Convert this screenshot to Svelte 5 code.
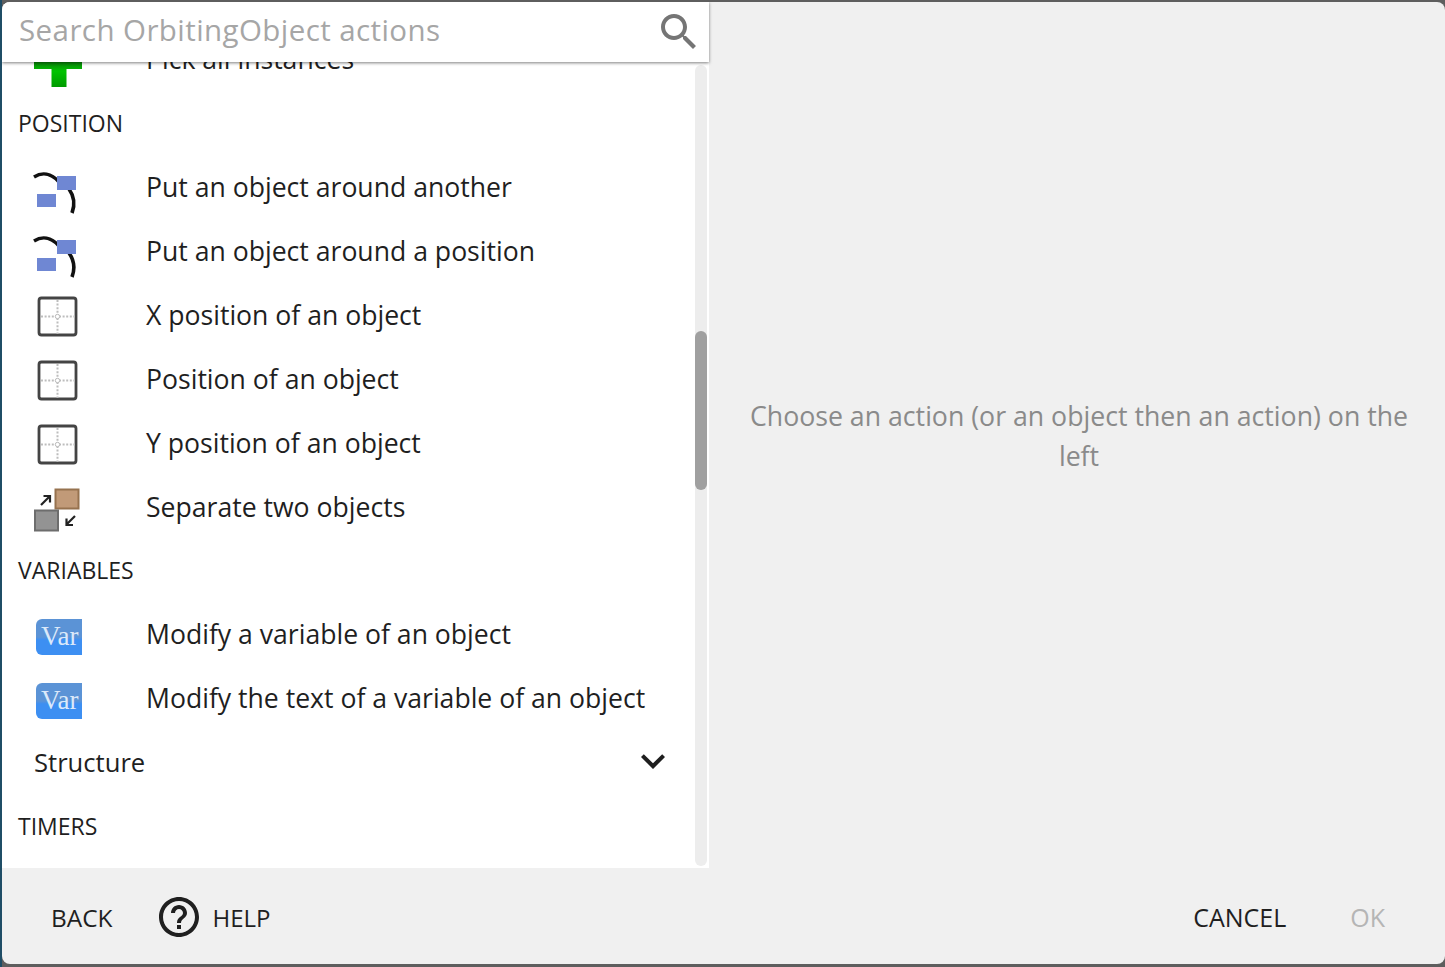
<script>
	const sections = [
		{
			title: 'POSITION',
			rows: [
				{ icon: 'arc', label: 'Put an object around another' },
				{ icon: 'arc', label: 'Put an object around a position' },
				{ icon: 'cross', label: 'X position of an object' },
				{ icon: 'cross', label: 'Position of an object' },
				{ icon: 'cross', label: 'Y position of an object' },
				{ icon: 'separate', label: 'Separate two objects' }
			]
		},
		{
			title: 'VARIABLES',
			rows: [
				{ icon: 'var', label: 'Modify a variable of an object' },
				{ icon: 'var', label: 'Modify the text of a variable of an object' }
			]
		}
	];
</script>

<div class="backdrop">
	<div class="dialog">
		<div class="content">
			<div class="left">
				<div class="search">
					<input class="search-input" type="text" placeholder="Search OrbitingObject actions" />
					<svg class="search-icon" viewBox="0 0 24 24" fill="#757575">
						<path d="M15.5 14h-.79l-.28-.27C15.41 12.59 16 11.11 16 9.5 16 5.91 13.09 3 9.5 3S3 5.91 3 9.5 5.91 16 9.5 16c1.61 0 3.09-.59 4.23-1.57l.27.28v.79l5 4.99L20.49 19l-4.99-5zm-6 0C7.01 14 5 11.99 5 9.5S7.01 5 9.5 5 14 7.01 14 9.5 11.99 14 9.5 14z" />
					</svg>
				</div>
				<div class="list">
					<div class="list-inner">
						<div class="row first">
							<svg class="icon" viewBox="0 0 48 48">
								<defs>
									<linearGradient id="green" x1="0" y1="0" x2="0" y2="1">
										<stop offset="0" stop-color="#0a8a0a" />
										<stop offset="0.6" stop-color="#078f07" />
										<stop offset="0.72" stop-color="#00c400" />
										<stop offset="1" stop-color="#009a00" />
									</linearGradient>
								</defs>
								<path d="M17.5 -6h15v22H48v17H32.5v18h-15V33H0V16h17.5z" fill="url(#green)" />
							</svg>
							<span class="label">Pick all instances</span>
						</div>
						{#each sections as section}
							<div class="section-title"><span>{section.title}</span></div>
							{#each section.rows as row}
								<div class="row">
									{#if row.icon === 'arc'}
										<svg class="icon" viewBox="0 0 48 48">
											<path d="M0 13C8 8 17 9 25 18" fill="none" stroke="#111" stroke-width="3.4" />
											<path d="M35 25C40 32 41 41 38 49" fill="none" stroke="#111" stroke-width="3.6" />
											<rect x="23" y="12" width="19" height="14" fill="#6f87d3" />
											<rect x="3" y="30" width="19" height="13" fill="#6f87d3" />
										</svg>
									{:else if row.icon === 'cross'}
										<svg class="icon" viewBox="0 0 48 48">
											<rect x="5" y="6" width="37" height="37" rx="2.5" fill="#fff" stroke="#444" stroke-width="2.8" />
											<path d="M23.5 8V42M7 24.5H41" stroke="#bdbdbd" stroke-width="2" stroke-dasharray="2 1.6" fill="none" />
											<circle cx="23.5" cy="24.5" r="2.2" fill="#fff" stroke="#bbb" />
										</svg>
									{:else if row.icon === 'separate'}
										<svg class="icon" viewBox="0 0 48 48">
											<rect x="21.5" y="5.5" width="23" height="19" fill="#c19a78" stroke="#96724f" stroke-width="2" />
											<rect x="1" y="26.5" width="23" height="20" fill="#939393" stroke="#6d6d6d" stroke-width="2" />
											<path d="M7 21L15 13M9.5 12H16V18.5" fill="none" stroke="#222" stroke-width="2.2" />
											<path d="M41 32L33 40M39 41H32.5V34.5" fill="none" stroke="#222" stroke-width="2.2" />
										</svg>
									{:else}
										<div class="var-icon">Var</div>
									{/if}
									<span class="label">{row.label}</span>
								</div>
							{/each}
						{/each}
						<div class="row group">
							<span class="label-group">Structure</span>
							<svg class="chevron" viewBox="0 0 24 24" fill="#1f1f1f">
								<path d="M16.59 8.59L12 13.17 7.41 8.59 6 10l6 6 6-6z" />
							</svg>
						</div>
						<div class="section-title"><span>TIMERS</span></div>
					</div>
					<div class="track"><div class="thumb"></div></div>
				</div>
			</div>
			<div class="right">
				<p>Choose an action (or an object then an action) on the left</p>
			</div>
		</div>
		<div class="footer">
			<div class="actions">
				<button class="btn back">BACK</button>
				<button class="btn help">
					<svg viewBox="0 0 24 24" fill="#1f1f1f">
						<path d="M11 18h2v-2h-2v2zm1-16C6.48 2 2 6.48 2 12s4.48 10 10 10 10-4.48 10-10S17.52 2 12 2zm0 18c-4.41 0-8-3.59-8-8s3.59-8 8-8 8 3.59 8 8-3.59 8-8 8zm0-14c-2.21 0-4 1.79-4 4h2c0-1.1.9-2 2-2s2 .9 2 2c0 2-3 1.75-3 5h2c0-2.25 3-2.5 3-5 0-2.21-1.79-4-4-4z" />
					</svg>
					HELP
				</button>
			</div>
			<div class="actions">
				<button class="btn">CANCEL</button>
				<button class="btn disabled">OK</button>
			</div>
		</div>
	</div>
</div>

<style>
	:global(body) {
		margin: 0;
		background: #5a5a5a;
	}

	.backdrop {
		box-sizing: border-box;
		width: 1445px;
		height: 967px;
		padding: 2px 0 3px 0;
		border-left: 2px solid #1f4d66;
		background: #5e5e5e;
		font-family: 'Open Sans', 'Noto Sans', sans-serif;
		color: #1f1f1f;
	}

	.dialog {
		height: 100%;
		display: flex;
		flex-direction: column;
		background: #f0f0f0;
		border-radius: 8px;
		overflow: hidden;
	}

	.content {
		flex: 1;
		min-height: 0;
		display: flex;
	}

	.left {
		width: 707px;
		display: flex;
		flex-direction: column;
		background: #fff;
		position: relative;
	}

	.search {
		height: 60px;
		box-sizing: border-box;
		flex: none;
		display: flex;
		align-items: center;
		padding: 0 6px 0 17px;
		background: #fff;
		box-shadow: 0 1px 3px rgba(0, 0, 0, 0.5);
		position: relative;
		z-index: 1;
	}

	.search-input {
		flex: 1;
		min-width: 0;
		margin-bottom: 6px;
		border: none;
		outline: none;
		padding: 0;
		background: none;
		font-family: inherit;
		font-size: 29.5px;
		letter-spacing: 0.42px;
		color: #1f1f1f;
	}

	.search-input::placeholder {
		color: #a6a6a6;
		opacity: 1;
	}

	.search-icon {
		width: 48px;
		height: 48px;
		flex: none;
	}

	.list {
		flex: 1;
		min-height: 0;
		overflow: hidden;
		position: relative;
	}

	.list-inner {
		margin-top: -34px;
	}

	.row {
		height: 64px;
		display: flex;
		align-items: center;
		padding-left: 32px;
		font-size: 26.6px;
	}

	.section-title {
		height: 63.5px;
		display: flex;
		align-items: center;
		padding-left: 16px;
		font-size: 23px;
	}

	.section-title span,
	.label,
	.label-group {
		margin-bottom: 2px;
	}

	.icon {
		width: 48px;
		height: 48px;
		flex: none;
		overflow: visible;
		filter: blur(0.4px);
	}

	.label {
		margin-left: 64px;
		white-space: nowrap;
	}

	.label-group {
		font-size: 25.6px;
	}

	.var-icon {
		width: 46px;
		height: 36px;
		margin: 4px 0 0 2px;
		flex: none;
		box-sizing: border-box;
		padding-left: 5px;
		border-radius: 6px 0 0 6px;
		background: linear-gradient(#5b93d6 0 50%, #3d8ff2 58% 100%);
		color: #dbe9fa;
		font-family: 'Liberation Serif', serif;
		font-size: 27px;
		line-height: 35px;
		overflow: hidden;
	}

	.group {
		justify-content: space-between;
		padding-right: 32px;
	}

	.chevron {
		width: 48px;
		height: 48px;
		margin-bottom: 4px;
	}

	.track {
		position: absolute;
		top: 3px;
		bottom: 2px;
		right: 2px;
		width: 12px;
		background: #ededed;
		border-radius: 6px;
	}

	.thumb {
		margin-top: 266px;
		height: 159px;
		background: #a0a0a0;
		border-radius: 6px;
	}

	.right {
		flex: 1;
		min-width: 0;
		display: flex;
		align-items: center;
		justify-content: center;
		padding: 2px 32px 0 36px;
	}

	.right p {
		margin: 0;
		text-align: center;
		font-size: 26.7px;
		line-height: 40px;
		color: #8a8a8a;
	}

	.footer {
		height: 96px;
		box-sizing: border-box;
		flex: none;
		display: flex;
		justify-content: space-between;
		align-items: center;
		padding: 2px 44px 0 33px;
	}

	.actions {
		display: flex;
		align-items: center;
	}

	.btn {
		display: flex;
		align-items: center;
		border: none;
		background: none;
		padding: 0 16px;
		font-family: inherit;
		font-size: 25px;
		color: #1f1f1f;
	}

	.back {
		font-size: 24.4px;
	}

	.help {
		margin-left: 31px;
		padding-left: 0;
		gap: 13px;
		font-size: 24px;
	}

	.help svg {
		width: 48px;
		height: 48px;
		margin-left: -4px;
		margin-right: -4px;
	}

	.disabled {
		margin-left: 32px;
		color: #b5b5b5;
	}
</style>
